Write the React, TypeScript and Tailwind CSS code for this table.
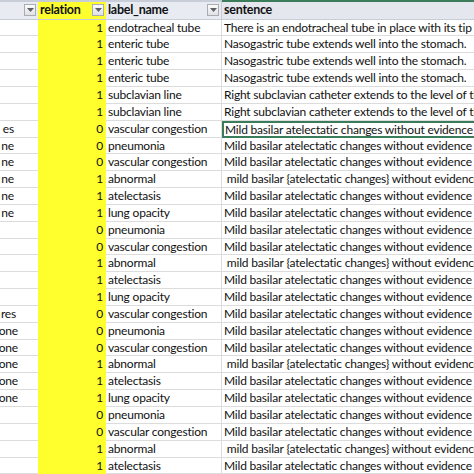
const rows: [string, string, string, string][] = [
  ['', '1', 'endotracheal tube', 'There is an endotracheal tube in place with its tip at the level of the clavicles.'],
  ['', '1', 'enteric tube', 'Nasogastric tube extends well into the stomach.'],
  ['', '1', 'enteric tube', 'Nasogastric tube extends well into the stomach.'],
  ['', '1', 'enteric tube', 'Nasogastric tube extends well into the stomach.'],
  ['', '1', 'subclavian line', 'Right subclavian catheter extends to the level of the mid SVC.'],
  ['', '1', 'subclavian line', 'Right subclavian catheter extends to the level of the mid SVC.'],
  ['es', '0', 'vascular congestion', 'Mild basilar atelectatic changes without evidence'],
  ['ne', '0', 'pneumonia', 'Mild basilar atelectatic changes without evidence'],
  ['ne', '0', 'vascular congestion', 'Mild basilar atelectatic changes without evidence'],
  ['ne', '1', 'abnormal', ' mild basilar {atelectatic changes} without evidence'],
  ['ne', '1', 'atelectasis', 'Mild basilar atelectatic changes without evidence'],
  ['ne', '1', 'lung opacity', 'Mild basilar atelectatic changes without evidence'],
  ['', '0', 'pneumonia', 'Mild basilar atelectatic changes without evidence'],
  ['', '0', 'vascular congestion', 'Mild basilar atelectatic changes without evidence'],
  ['', '1', 'abnormal', ' mild basilar {atelectatic changes} without evidence'],
  ['', '1', 'atelectasis', 'Mild basilar atelectatic changes without evidence'],
  ['', '1', 'lung opacity', 'Mild basilar atelectatic changes without evidence'],
  ['res', '0', 'vascular congestion', 'Mild basilar atelectatic changes without evidence'],
  ['one', '0', 'pneumonia', 'Mild basilar atelectatic changes without evidence'],
  ['one', '0', 'vascular congestion', 'Mild basilar atelectatic changes without evidence'],
  ['one', '1', 'abnormal', ' mild basilar {atelectatic changes} without evidence'],
  ['one', '1', 'atelectasis', 'Mild basilar atelectatic changes without evidence'],
  ['one', '1', 'lung opacity', 'Mild basilar atelectatic changes without evidence'],
  ['', '0', 'pneumonia', 'Mild basilar atelectatic changes without evidence'],
  ['', '0', 'vascular congestion', 'Mild basilar atelectatic changes without evidence'],
  ['', '1', 'abnormal', ' mild basilar {atelectatic changes} without evidence'],
  ['', '1', 'atelectasis', 'Mild basilar atelectatic changes without evidence'],
];

// the first column is scrolled off to the left, only the tail of each value shows
const tailPad: Record<string, string> = {
  es: 'pr-[24px]',
  ne: 'pr-[24px]',
  res: 'pr-[22px]',
  one: 'pr-[20px]',
};

function FilterButton() {
  return (
    <div className="flex h-[12px] w-[12px] shrink-0 items-center justify-center border border-[#a8acb3] bg-gradient-to-b from-[#fbfbfb] to-[#dfe1e5]">
      <svg width="7" height="4" viewBox="0 0 7 4">
        <path d="M0 0h7L3.5 4z" fill="#5b5f66" />
      </svg>
    </div>
  );
}

export default function App() {
  return (
    <div
      className="h-[474px] w-[474px] overflow-hidden bg-white text-[#111]"
      style={{ fontFamily: 'Lato, "Open Sans", sans-serif' }}
    >
      {/* header row */}
      <div className="flex h-[19.6px] text-[12.5px] tracking-[-0.25px]">
        <div className="flex w-[38px] shrink-0 items-center justify-end border-t-2 border-b border-[#c8ced8] bg-[#e8ebf1] pr-[2px]">
          <FilterButton />
        </div>
        <div className="flex w-[68px] shrink-0 items-center border-t-2 border-b border-[#c8ced8] bg-[#ffff2e] pl-[2px] pr-[2px]">
          <span className="flex-1 font-bold">relation</span>
          <FilterButton />
        </div>
        <div className="flex w-[116px] shrink-0 items-center border-t-2 border-r border-b border-[#c8ced8] bg-[#e8ebf1] pl-[2px] pr-[2px]">
          <span className="flex-1 font-bold">label_name</span>
          <FilterButton />
        </div>
        <div className="flex flex-1 items-center border-t-2 border-t-[#3b7d5a] border-b border-b-[#c8ced8] bg-[#e4e7ee] pl-[2px]">
          <span className="font-bold">sentence</span>
        </div>
      </div>

      {rows.map(([a, rel, label, sentence], i) => (
        <div key={i} className="flex h-[16.85px] text-[12px] leading-[16px] tracking-[-0.2px]">
          <div
            className={
              'flex w-[38px] shrink-0 justify-end overflow-hidden border-b border-[#dcdcdc] ' +
              (tailPad[a] ?? 'pr-[20px]')
            }
          >
            <span className="whitespace-nowrap">{a}</span>
          </div>
          <div className="w-[68px] shrink-0 bg-[#ffff2e] pr-[3px] text-right">{rel}</div>
          <div className="w-[116px] shrink-0 overflow-hidden whitespace-nowrap border-r border-b border-[#dcdcdc] pl-[2px]">
            {label}
          </div>
          <div
            className={
              i === 6
                ? 'flex-1 overflow-hidden whitespace-pre border-2 border-r-0 border-[#3b7d5a] pl-[1px] leading-[13px]'
                : 'flex-1 overflow-hidden whitespace-pre border-b border-[#dcdcdc] pl-[2px]'
            }
          >
            {sentence}
          </div>
        </div>
      ))}
    </div>
  );
}
